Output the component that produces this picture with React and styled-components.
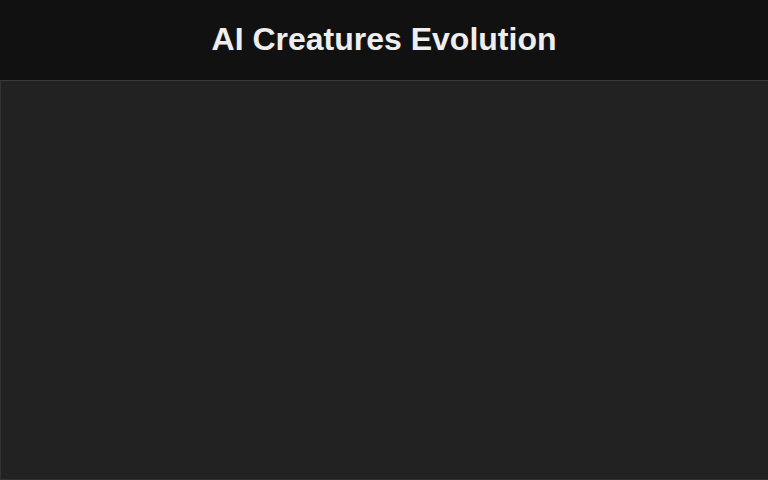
import React from "react"
import styled, { createGlobalStyle } from "styled-components"

const GlobalStyle = createGlobalStyle`
  html, body {
    margin: 0;
    padding: 0;
    background: #222;
    overflow: hidden;
  }
  body {
    font-family: "Liberation Sans", Arial, sans-serif;
  }
`

const Page = styled.div`
  display: flex;
  flex-direction: column;
  height: 100vh;
`

const Header = styled.header`
  height: 78px;
  padding-bottom: 2px;
  background: #111;
  border-bottom: 1px solid #3a3a3a;
  display: flex;
  align-items: center;
  justify-content: center;
  flex-shrink: 0;
`

const Title = styled.h1`
  margin: 0;
  color: #eee;
  font-size: 32px;
  font-weight: bold;
`

// simulation area where the creatures live
const World = styled.div`
  flex: 1;
  width: 100%;
  background: #222;
  border: 1px solid #333;
  border-top: none;
`

export default function App() {
  return (
    <>
      <GlobalStyle />
      <Page>
        <Header>
          <Title>AI Creatures Evolution</Title>
        </Header>
        <World />
      </Page>
    </>
  )
}
